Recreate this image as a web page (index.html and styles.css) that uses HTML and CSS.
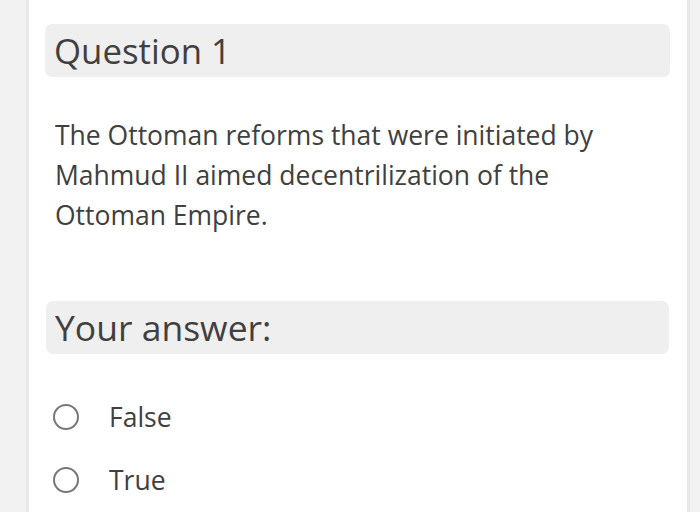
FILE: index.html
```html
<!DOCTYPE html>
<html>
<head>
<meta charset="utf-8">
<link rel="stylesheet" href="styles.css">
</head>
<body>
<div class="page">
  <div class="card">
    <div class="title-box">Question 1</div>
    <p class="question">The Ottoman reforms that were initiated by Mahmud II aimed decentrilization of the Ottoman Empire.</p>
    <div class="answer-box">Your answer:</div>
    <div class="options">
      <label class="option"><span class="radio"></span><span class="label">False</span></label>
      <label class="option"><span class="radio"></span><span class="label">True</span></label>
    </div>
  </div>
</div>
</body>
</html>
```
FILE: styles.css
```css
html, body {
  margin: 0;
  padding: 0;
  background: #f2f2f2;
  font-family: "Open Sans", "Noto Sans", sans-serif;
  color: #404040;
}
.page {
  display: flex;
  height: 512px;
  overflow: hidden;
}
.card {
  margin-left: 26px;
  width: 625px;
  flex: none;
  background: #fff;
  border-left: 3px solid #e8e8e8;
  border-right: 3px solid #e8e8e8;
  padding: 24px 17px 0 16px;
}
.title-box {
  background: #efefef;
  border-radius: 7px;
  height: 53px;
  line-height: 53px;
  font-size: 34.8px;
  padding-left: 9px;
}
.question {
  margin: 38px 0 0 0;
  padding: 0 40px 0 10px;
  font-size: 26.5px;
  line-height: 40px;
}
.answer-box {
  background: #efefef;
  border-radius: 7px;
  height: 53px;
  line-height: 53px;
  font-size: 35.5px;
  padding-left: 9px;
  margin: 66px 1px 0 1px;
}
.options {
  display: flex;
  flex-direction: column;
  gap: 37px;
  margin-top: 50px;
  padding-left: 8px;
}
.option {
  display: flex;
  align-items: center;
  gap: 30px;
  font-size: 26.5px;
  height: 26px;
}
.radio {
  width: 22px;
  height: 22px;
  border: 2px solid #777;
  border-radius: 50%;
  flex: none;
}
```
